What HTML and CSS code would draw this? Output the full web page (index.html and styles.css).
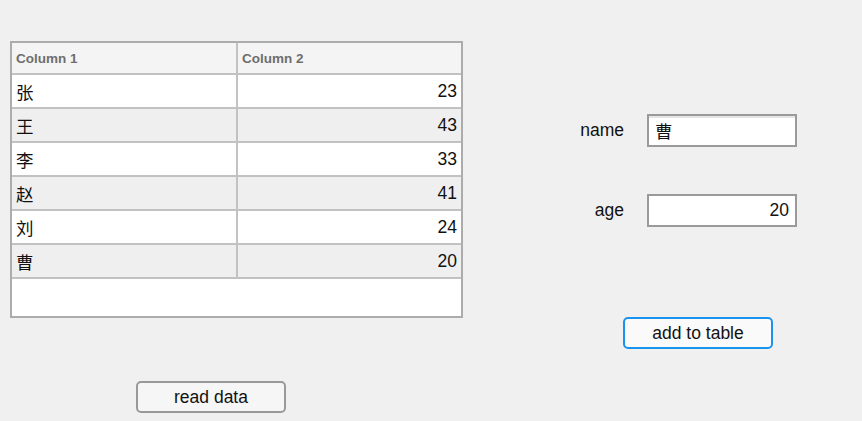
FILE: index.html
```html
<!DOCTYPE html>
<html lang="zh">
<head>
<meta charset="utf-8">
<title>Table App</title>
<link rel="stylesheet" href="styles.css">
</head>
<body>
<div class="app">
  <div class="left">
    <div class="grid">
      <div class="row head">
        <div class="cell c1">Column 1</div>
        <div class="cell c2 hl">Column 2</div>
      </div>
      <div class="row"><div class="cell c1">张</div><div class="cell c2">23</div></div>
      <div class="row alt"><div class="cell c1">王</div><div class="cell c2">43</div></div>
      <div class="row"><div class="cell c1">李</div><div class="cell c2">33</div></div>
      <div class="row alt"><div class="cell c1">赵</div><div class="cell c2">41</div></div>
      <div class="row"><div class="cell c1">刘</div><div class="cell c2">24</div></div>
      <div class="row alt"><div class="cell c1">曹</div><div class="cell c2">20</div></div>
      <div class="filler"></div>
    </div>
    <button class="btn read">read data</button>
  </div>
  <div class="right">
    <div class="form">
      <label class="lbl">name</label>
      <div class="field">曹</div>
      <label class="lbl">age</label>
      <div class="field num">20</div>
    </div>
    <button class="btn add">add to table</button>
  </div>
</div>
</body>
</html>
```
FILE: styles.css
```css
* { box-sizing: border-box; }
html, body { margin: 0; padding: 0; }
body {
  background: #f0f0f0;
  font-family: "Liberation Sans", "Noto Sans CJK SC", sans-serif;
  font-size: 17.5px;
  color: #111;
  width: 862px;
  height: 421px;
  overflow: hidden;
}
.app {
  display: flex;
  align-items: flex-start;
}
.left {
  display: flex;
  flex-direction: column;
  padding: 41px 0 0 10px;
  width: 464px;
}
.grid {
  width: 453px;
  height: 277px;
  border: 2px solid #acacac;
  background: #fff;
  display: flex;
  flex-direction: column;
}
.row {
  display: grid;
  grid-template-columns: 226px 223px;
  height: 34px;
  border-bottom: 2px solid #c2c2c2;
  background: #fff;
}
.row.alt { background: #efefef; }
.row.head {
  height: 32px;
  background: #f4f4f4;
}
.cell {
  display: flex;
  align-items: center;
  padding: 0 4px;
  white-space: nowrap;
}
.c1 { border-right: 2px solid #c2c2c2; }
.c2 { justify-content: flex-end; padding-right: 4px; }
.head .cell {
  font-size: 13.5px;
  font-weight: bold;
  color: #6e6e6e;
}
.head .hl { justify-content: flex-start; }
.filler { flex: 1; background: #fff; }
.btn {
  width: 150px;
  height: 32px;
  border-radius: 5px;
  font-family: "Liberation Sans", "Noto Sans CJK SC", sans-serif;
  font-size: 17.5px;
  color: #111;
  padding: 0;
  display: flex;
  align-items: center;
  justify-content: center;
}
.read {
  margin: 63px 0 0 126px;
  border: 2px solid #999;
  background: #f6f6f6;
}
.right {
  margin-left: 100px;
  padding-top: 114px;
  display: flex;
  flex-direction: column;
}
.form {
  display: grid;
  grid-template-columns: 60px 150px;
  column-gap: 23px;
  row-gap: 47px;
  align-items: center;
}
.lbl {
  text-align: right;
  white-space: nowrap;
}
.field {
  height: 33px;
  border: 2px solid #9a9a9a;
  background: #fff;
  display: flex;
  align-items: center;
  padding: 0 6px;
  box-shadow: inset 0 2px 0 #e6e6e6;
}
.field.num { justify-content: flex-end; box-shadow: none; }
.add {
  margin: 90px 0 0 59px;
  border: 2px solid #1a93f0;
  background: #fafafa;
}
```
